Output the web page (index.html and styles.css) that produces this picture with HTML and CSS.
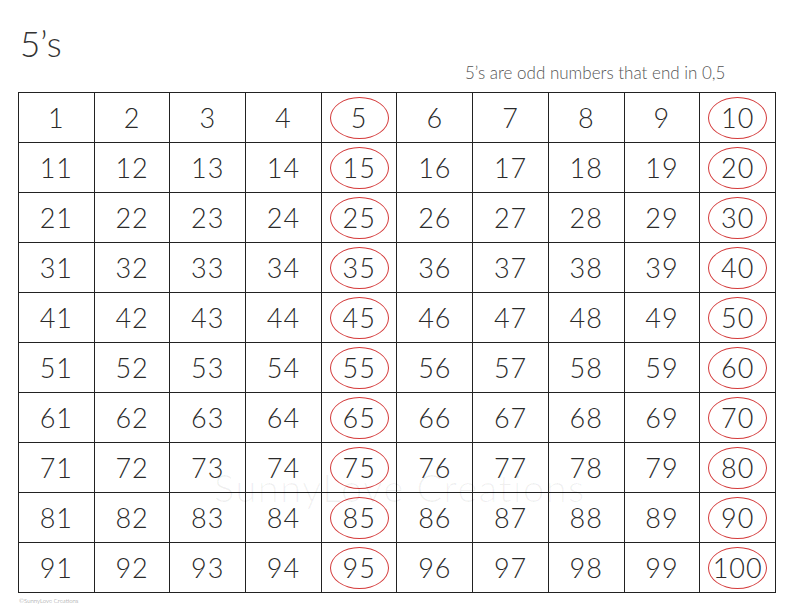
FILE: index.html
```html
<!DOCTYPE html>
<html>
<head>
<meta charset="utf-8">
<link rel="stylesheet" href="styles.css">
</head>
<body>
<div class="page">
  <h1 class="title">5’s</h1>
  <p class="note">5’s are odd numbers that end in 0,5</p>
  <div class="grid" id="grid"></div>
  <div class="watermark">SunnyLove Creations</div>
  <p class="copy">©SunnyLove Creations</p>
</div>
<script src="script.js"></script>
</body>
</html>
```
FILE: styles.css
```css
* { box-sizing: border-box; }
html, body { margin: 0; padding: 0; background: #fff; }
.page {
  position: relative;
  width: 794px;
  height: 612px;
  font-family: Lato, "Open Sans", sans-serif;
  font-weight: 300;
  color: #222;
}
.title {
  margin: 0;
  padding: 26px 0 0 20px;
  height: 60px;
  font-size: 35px;
  font-weight: 300;
  line-height: 34px;
  color: #333;
}
.note {
  margin: 0;
  padding-left: 465px;
  height: 32px;
  font-size: 17px;
  line-height: 26px;
  color: #555;
}
.grid {
  margin-left: 18px;
  width: 758px;
  display: grid;
  grid-template-columns: repeat(10, 1fr);
  grid-auto-rows: 50px;
  border-top: 1.5px solid #222;
  border-left: 1.5px solid #222;
}
.cell {
  display: flex;
  align-items: center;
  justify-content: center;
  border-right: 1.5px solid #222;
  border-bottom: 1.5px solid #222;
  font-size: 27px;
  letter-spacing: 1px;
  color: #2a2a2a;
}
.ring {
  display: flex;
  align-items: center;
  justify-content: center;
  width: 59px;
  height: 42px;
  border: 1.2px solid #d43a3a;
  border-radius: 50%;
}
.watermark {
  position: absolute;
  left: 214px;
  top: 464px;
  font-size: 38px;
  font-weight: 300;
  letter-spacing: 1.5px;
  color: rgba(0,0,0,0.06);
  pointer-events: none;
}
.copy {
  margin: 0;
  padding: 4px 0 0 19px;
  font-size: 6px;
  color: #888;
}
```
FILE: script.js
```js
var g = document.getElementById('grid');
for (var i = 1; i <= 100; i++) {
  var c = document.createElement('div');
  c.className = 'cell';
  if (i % 5 === 0) {
    var r = document.createElement('span');
    r.className = 'ring';
    r.textContent = i;
    c.appendChild(r);
  } else {
    c.textContent = i;
  }
  g.appendChild(c);
}
```
